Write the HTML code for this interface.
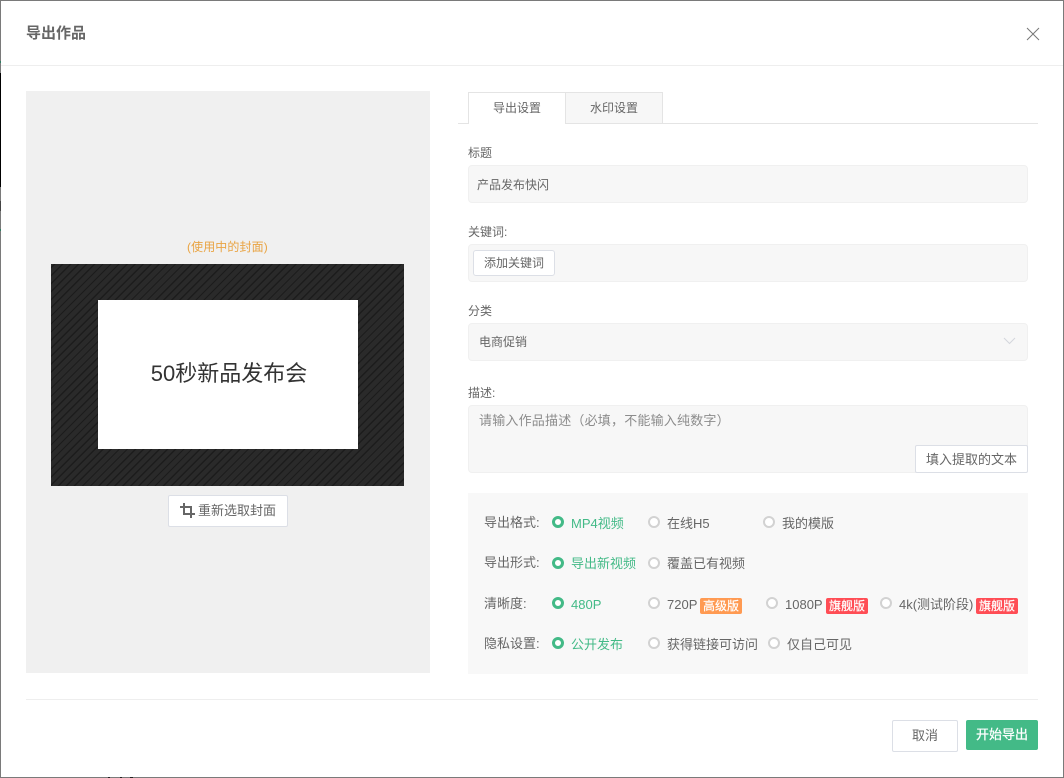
<!DOCTYPE html>
<html lang="zh"><head><meta charset="utf-8"><title>导出作品</title>
<style>
html,body{margin:0;padding:0;background:#fff}
body{width:1064px;height:778px;position:relative;overflow:hidden;font-family:"Liberation Sans","Noto Sans CJK SC",sans-serif;font-size:12px;color:#666}
.a{position:absolute;box-sizing:border-box}
.t{position:absolute;white-space:nowrap;line-height:20px;height:20px}
.s{font-size:13px}
.g{color:#43ba87}
.box{position:absolute;box-sizing:border-box;left:468px;width:560px;background:#f7f7f7;border:1px solid #f0f0f0;border-radius:4px}
.btn{position:absolute;box-sizing:border-box;background:#fff;border:1px solid #dcdfe6;border-radius:2px}
.r{position:absolute;box-sizing:border-box;width:12px;height:12px;border-radius:50%;border:2px solid #d2d2d2;background:#fff}
.r.on{border:3px solid #43ba87}
.b{position:absolute;box-sizing:border-box;width:42px;height:16px;line-height:16px;text-align:center;color:#fff;font-size:12px;border-radius:2px;white-space:nowrap;-webkit-text-stroke:.2px #fff}
.o{background:#ff9a52}.d{background:#ff4d55}
</style></head><body>
<div class="a" style="left:0;top:0;width:1064px;height:778px;border:1px solid #7a7a7a"></div>
<div class="a" style="left:0;top:73px;width:1px;height:114px;background:#000"></div>
<div class="a" style="left:0;top:201px;width:1px;height:10px;background:#444"></div>
<div class="a" style="left:0;top:61px;width:1px;height:2px;background:#2e7d62"></div>
<div class="a" style="left:0;top:229px;width:1px;height:2px;background:#2e7d62"></div>
<div class="a" style="left:108px;top:777px;width:2px;height:1px;background:#222"></div>
<div class="a" style="left:120px;top:777px;width:2px;height:1px;background:#222"></div>
<div class="a" style="left:130px;top:777px;width:3px;height:1px;background:#222"></div>

<div class="t" style="left:26px;top:24px;font-size:15px;font-weight:700;color:#666">导出作品</div>
<svg class="a" style="left:1026px;top:27px" width="14" height="14" viewBox="0 0 14 14"><path d="M1 1L13 13M13 1L1 13" stroke="#777" stroke-width="1" fill="none"/></svg>
<div class="a" style="left:1px;top:65px;width:1062px;height:1px;background:#eee"></div>

<div class="a" style="left:26px;top:91px;width:404px;height:582px;background:#f0f0f0"></div>
<div class="t" style="left:187px;top:237px;color:#e9a443;letter-spacing:.1px">(使用中的封面)</div>
<div class="a" style="left:51px;top:264px;width:353px;height:222px;background:repeating-linear-gradient(-45deg,#2a2a2a 0,#2a2a2a 4.4px,#1c1c1c 4.4px,#1c1c1c 5.7px)"></div>
<div class="a" style="left:98px;top:300px;width:260px;height:149px;background:#fff"></div>
<div class="t" style="left:99px;width:260px;top:359px;height:30px;line-height:30px;text-align:center;font-size:22px;color:#333">50秒新品发布会</div>
<div class="btn" style="left:168px;top:495px;width:120px;height:32px"></div>
<svg class="a" style="left:180px;top:503px" width="15" height="15" viewBox="0 0 15 15"><path d="M4 0V11H15M0 4H11V15" stroke="#666" stroke-width="2" fill="none"/></svg>
<div class="t s" style="left:198px;top:501px">重新选取封面</div>

<div class="a" style="left:458px;top:123px;width:580px;height:1px;background:#e4e4e4"></div>
<div class="a" style="left:468px;top:92px;width:98px;height:32px;background:#fff;border:1px solid #e4e4e4;border-bottom:0"></div>
<div class="a" style="left:565px;top:92px;width:98px;height:32px;background:#f7f7f7;border:1px solid #e4e4e4"></div>
<div class="t" style="left:493px;top:98px">导出设置</div>
<div class="t" style="left:590px;top:98px">水印设置</div>

<div class="t" style="left:468px;top:143px">标题</div>
<div class="box" style="top:165px;height:38px"></div>
<div class="t" style="left:477px;top:175px">产品发布快闪</div>

<div class="t" style="left:468px;top:222px">关键词:</div>
<div class="box" style="top:244px;height:38px"></div>
<div class="btn" style="left:473px;top:250px;width:82px;height:26px;border-radius:3px"></div>
<div class="t" style="left:484px;top:253px">添加关键词</div>

<div class="t" style="left:468px;top:301px">分类</div>
<div class="box" style="top:323px;height:38px"></div>
<div class="t" style="left:479px;top:332px">电商促销</div>
<svg class="a" style="left:1003px;top:337px" width="13" height="8" viewBox="0 0 13 8"><path d="M1 1L6.5 6.5L12 1" stroke="#d4d6dc" stroke-width="1" fill="none"/></svg>

<div class="t" style="left:468px;top:383px">描述:</div>
<div class="box" style="top:405px;height:68px"></div>
<div class="t s" style="left:479px;top:411px;color:#8c8c8c;letter-spacing:.2px">请输入作品描述（必填，不能输入纯数字）</div>
<div class="btn" style="left:915px;top:445px;width:113px;height:28px;border-radius:2px"></div>
<div class="t s" style="left:926px;top:450px">填入提取的文本</div>

<div class="a" style="left:468px;top:493px;width:560px;height:181px;background:#f8f8f8"></div>

<div class="t s" style="left:484px;top:513px">导出格式:</div>
<div class="r on" style="left:552px;top:516px"></div><div class="t s g" style="left:571px;top:514px">MP4视频</div>
<div class="r" style="left:648px;top:516px"></div><div class="t s" style="left:667px;top:514px">在线H5</div>
<div class="r" style="left:763px;top:516px"></div><div class="t s" style="left:782px;top:514px">我的模版</div>

<div class="t s" style="left:484px;top:553px">导出形式:</div>
<div class="r on" style="left:552px;top:557px"></div><div class="t s g" style="left:571px;top:554px">导出新视频</div>
<div class="r" style="left:648px;top:557px"></div><div class="t s" style="left:667px;top:554px">覆盖已有视频</div>

<div class="t s" style="left:484px;top:594px">清晰度:</div>
<div class="r on" style="left:552px;top:597px"></div><div class="t s g" style="left:571px;top:595px">480P</div>
<div class="r" style="left:648px;top:597px"></div><div class="t s" style="left:667px;top:595px">720P</div><div class="b o" style="left:700px;top:598px">高级版</div>
<div class="r" style="left:766px;top:597px"></div><div class="t s" style="left:785px;top:595px">1080P</div><div class="b d" style="left:826px;top:598px">旗舰版</div>
<div class="r" style="left:880px;top:597px"></div><div class="t s" style="left:899px;top:595px">4k(测试阶段)</div><div class="b d" style="left:976px;top:598px">旗舰版</div>

<div class="t s" style="left:484px;top:634px">隐私设置:</div>
<div class="r on" style="left:552px;top:637px"></div><div class="t s g" style="left:571px;top:635px">公开发布</div>
<div class="r" style="left:648px;top:637px"></div><div class="t s" style="left:667px;top:635px">获得链接可访问</div>
<div class="r" style="left:768px;top:637px"></div><div class="t s" style="left:787px;top:635px">仅自己可见</div>

<div class="a" style="left:26px;top:699px;width:1012px;height:1px;background:#eee"></div>
<div class="btn" style="left:892px;top:720px;width:66px;height:32px"></div>
<div class="t s" style="left:912px;top:726px">取消</div>
<div class="a" style="left:966px;top:720px;width:72px;height:30px;background:#43ba87;border-radius:2px"></div>
<div class="t s" style="left:976px;top:725px;color:#fff;-webkit-text-stroke:.25px #fff">开始导出</div>
</body></html>
